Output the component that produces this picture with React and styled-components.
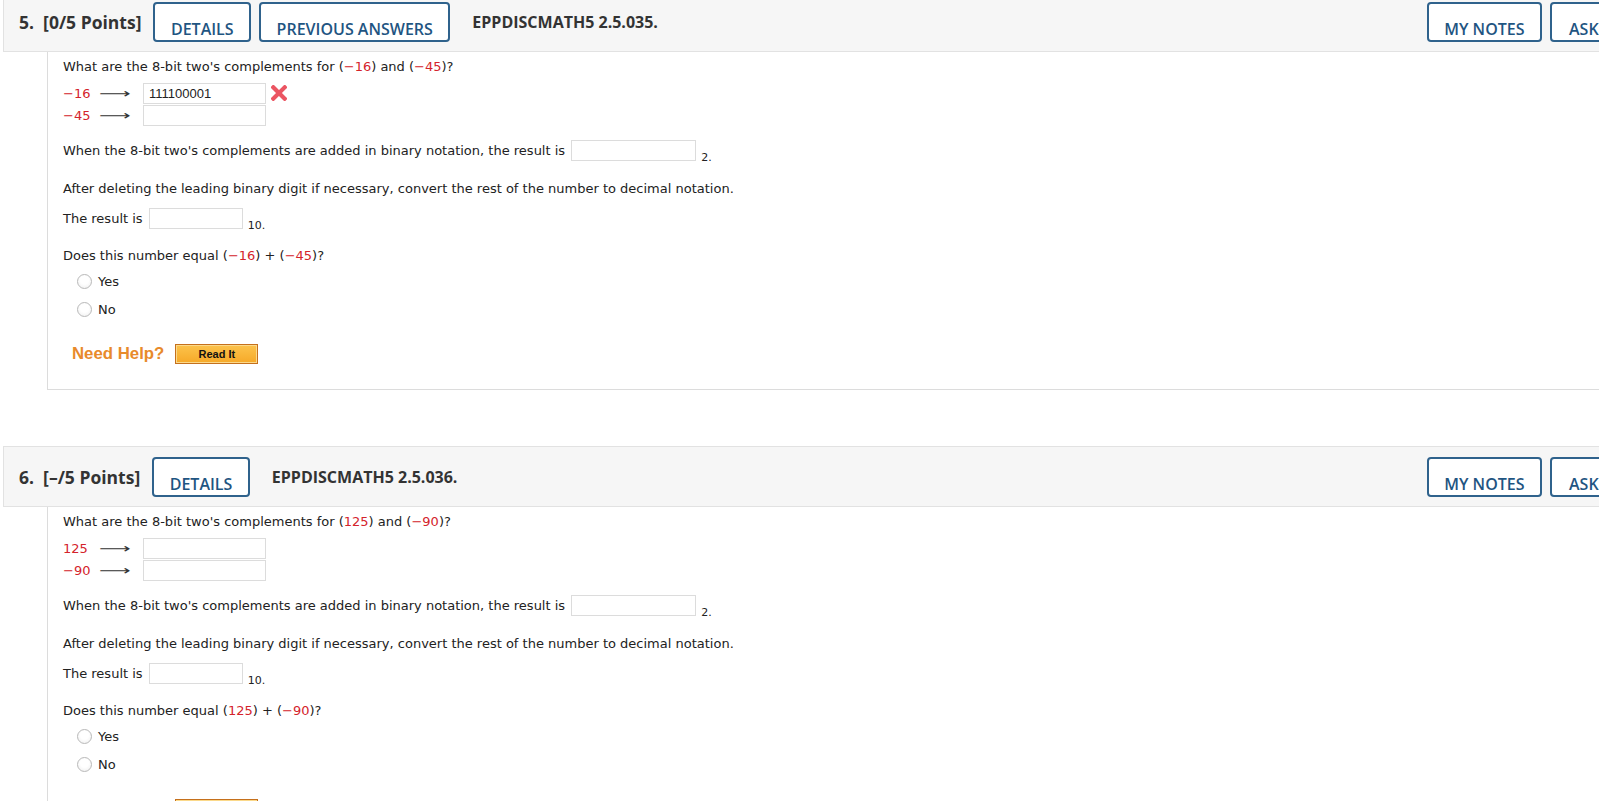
import React from "react";
import styled, { createGlobalStyle } from "styled-components";

const GlobalStyle = createGlobalStyle`
  html, body {
    margin: 0;
    padding: 0;
    background: #fff;
    overflow: hidden;
  }
  body {
    font-family: "DejaVu Sans", Verdana, sans-serif;
    color: #222;
  }
`;

const Minus = "\u2212";

const questions = [
  {
    num: "5.",
    points: "[0/5 Points]",
    code: "EPPDISCMATH5 2.5.035.",
    prev: true,
    a: `${Minus}16`,
    b: `${Minus}45`,
    answer: "111100001",
    wrong: true,
    closed: true,
  },
  {
    num: "6.",
    points: "[\u2013/5 Points]",
    code: "EPPDISCMATH5 2.5.036.",
    prev: false,
    a: "125",
    b: `${Minus}90`,
    answer: "",
    wrong: false,
    closed: false,
  },
];

function Question({ q, first }) {
  return (
    <Block first={first}>
      <Header>
        <Num>
          {q.num}&nbsp;&nbsp;{q.points}
        </Num>
        <BtnGroup>
          <HeadButton>DETAILS</HeadButton>
          {q.prev && <HeadButton>PREVIOUS ANSWERS</HeadButton>}
        </BtnGroup>
        <Code>{q.code}</Code>
        <RightGroup>
          <HeadButton>MY NOTES</HeadButton>
          <HeadButton wide>ASK YOUR TEACHER</HeadButton>
        </RightGroup>
      </Header>
      <Panel closed={q.closed}>
        <Line>
          What are the 8-bit two's complements for (<Red>{q.a}</Red>) and (
          <Red>{q.b}</Red>)?
        </Line>
        <Rows>
          <ArrowRow>
            <NumLabel>{q.a}</NumLabel>
            <Arrow>⟶</Arrow>
            <Field w={123} defaultValue={q.answer} />
            {q.wrong && (
              <Cross viewBox="0 0 14 14">
                <path d="M2 2 L12 12 M12 2 L2 12" />
              </Cross>
            )}
          </ArrowRow>
          <ArrowRow>
            <NumLabel>{q.b}</NumLabel>
            <Arrow>⟶</Arrow>
            <Field w={123} />
          </ArrowRow>
        </Rows>
        <FieldLine mt={13}>
          When the 8-bit two's complements are added in binary notation, the
          result is <Field w={125} gap /> <Sub>2.</Sub>
        </FieldLine>
        <Line mt={20}>
          After deleting the leading binary digit if necessary, convert the rest
          of the number to decimal notation.
        </Line>
        <FieldLine mt={10}>
          The result is <Field w={94} gap /> <Sub>10.</Sub>
        </FieldLine>
        <Line mt={19}>
          Does this number equal (<Red>{q.a}</Red>) + (<Red>{q.b}</Red>)?
        </Line>
        <Choices>
          <Choice>
            <Radio />
            Yes
          </Choice>
          <Choice>
            <Radio />
            No
          </Choice>
        </Choices>
        <HelpRow>
          <HelpText>Need Help?</HelpText>
          <ReadIt>Read It</ReadIt>
        </HelpRow>
      </Panel>
    </Block>
  );
}

export default function App() {
  return (
    <>
      <GlobalStyle />
      <Page>
        {questions.map((q, i) => (
          <Question key={q.num} q={q} first={i === 0} />
        ))}
      </Page>
    </>
  );
}

const Page = styled.div`
  margin-top: -9px;
  padding-left: 3px;
`;

const Block = styled.section`
  margin-top: ${(p) => (p.first ? "0" : "56px")};
`;

const Header = styled.div`
  display: flex;
  align-items: center;
  height: 61px;
  box-sizing: border-box;
  padding: 10px 0 9px 15px;
  background: #f6f6f6;
  border: 1px solid #e2e2e2;
  border-right: none;
  overflow: hidden;
  font-family: "Open Sans", "Liberation Sans", sans-serif;
`;

const Num = styled.div`
  font-size: 17.5px;
  font-weight: 700;
  color: #333;
  white-space: nowrap;
  margin-right: 12px;
`;

const BtnGroup = styled.div`
  display: flex;
  gap: 8px;
`;

const HeadButton = styled.button`
  display: flex;
  align-items: flex-end;
  justify-content: ${(p) => (p.wide ? "flex-start" : "center")};
  height: 40px;
  box-sizing: border-box;
  padding: 0 15.5px 0;
  ${(p) => p.wide && "width: 190px; padding-left: 17px;"}
  flex-shrink: 0;
  background: #fff;
  border: 2px solid #2f628c;
  border-radius: 4px;
  font-family: "Open Sans", "Liberation Sans", sans-serif;
  font-size: 16px;
  line-height: 22px;
  font-weight: 600;
  color: #1f5582;
  white-space: nowrap;
`;

const Code = styled.div`
  margin-left: 22px;
  font-size: 16px;
  font-weight: 700;
  color: #333;
  white-space: nowrap;
`;

const RightGroup = styled.div`
  display: flex;
  gap: 8px;
  margin-left: auto;
  margin-right: -141px;
`;

const Panel = styled.div`
  margin-left: 44px;
  padding: 7px 15px ${(p) => (p.closed ? "25px" : "60px")};
  border-left: 1px solid #dcdcdc;
  border-bottom: ${(p) => (p.closed ? "1px solid #dcdcdc" : "none")};
  font-size: 13px;
`;

const Line = styled.div`
  line-height: 16px;
  margin-top: ${(p) => p.mt || 0}px;
`;

const Red = styled.span`
  color: #d4232b;
`;

const Rows = styled.div`
  margin-top: 7px;
`;

const ArrowRow = styled.div`
  display: flex;
  align-items: center;
  height: 22px;
`;

const NumLabel = styled.span`
  width: 36px;
  color: #d4232b;
`;

const Arrow = styled.span`
  width: 44px;
  font-size: 13px;
  color: #333;
  transform: scaleX(1.7);
  transform-origin: left center;
`;

const Field = styled.input`
  width: ${(p) => p.w}px;
  height: 21px;
  box-sizing: border-box;
  margin: 0 ${(p) => (p.gap ? "2px" : "0")};
  padding: 0 5px;
  border: 1px solid #dcdcdc;
  background: #fff;
  font-family: "Liberation Sans", Arial, sans-serif;
  font-size: 13px;
  color: #222;
  outline: none;
  vertical-align: middle;
`;

const Cross = styled.svg`
  width: 16px;
  height: 16px;
  margin-left: 5px;
  fill: none;
  stroke: #eb5562;
  stroke-width: 3.6;
  stroke-linecap: square;
`;

const FieldLine = styled.div`
  display: flex;
  align-items: center;
  height: 22px;
  margin-top: ${(p) => p.mt}px;
  white-space: pre;
`;

const Sub = styled.span`
  font-size: 11px;
  align-self: flex-end;
  margin-left: 3px;
  line-height: 14px;
  transform: translateY(4px);
`;

const Choices = styled.div`
  margin-top: 4px;
  margin-left: 14px;
`;

const Choice = styled.label`
  display: flex;
  align-items: center;
  height: 27.5px;
  gap: 6px;
`;

const Radio = styled.span`
  width: 13px;
  height: 13px;
  border-radius: 50%;
  border: 1px solid #b9b9b9;
  background: radial-gradient(circle at 50% 40%, #fff 40%, #ececec 100%);
`;

const HelpRow = styled.div`
  display: flex;
  align-items: center;
  margin-top: 21px;
  margin-left: 9px;
`;

const HelpText = styled.span`
  font-family: "Liberation Sans", Arial, sans-serif;
  font-size: 16.8px;
  font-weight: 700;
  color: #e88a2b;
`;

const ReadIt = styled.button`
  width: 83px;
  height: 20px;
  margin-left: 11px;
  padding: 0;
  background: linear-gradient(#fcc34c, #f6a928);
  border: 1px solid #c5701c;
  box-shadow: inset 0 0 0 1px #fbd98a;
  font-family: "Liberation Sans", Arial, sans-serif;
  font-size: 11px;
  font-weight: 700;
  color: #111;
`;
